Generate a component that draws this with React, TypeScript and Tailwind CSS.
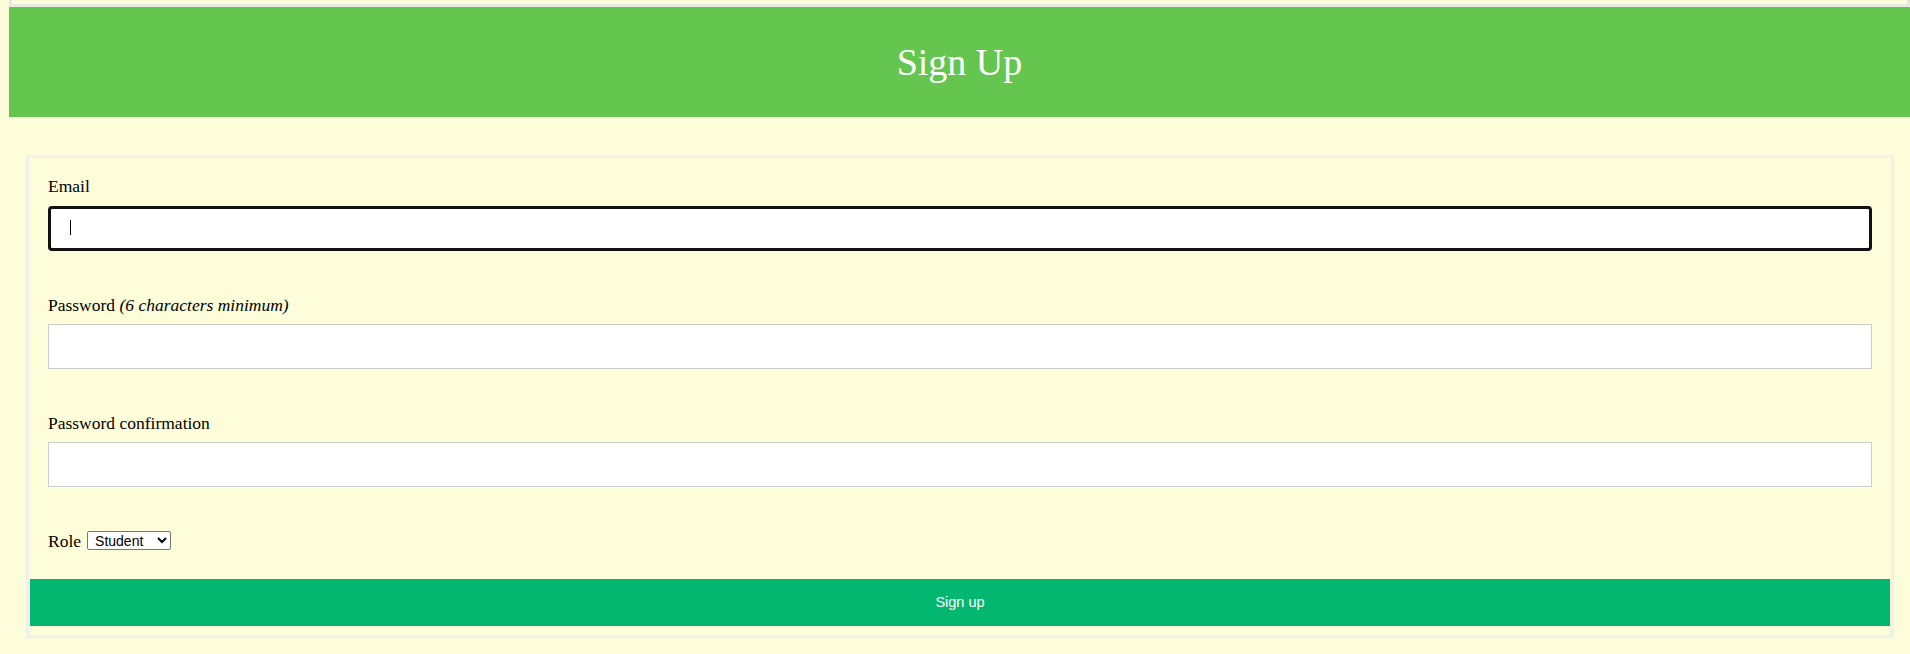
import React from "react"

const serif = "font-['Liberation_Serif','Times_New_Roman',serif]"
const sans = "font-['Liberation_Sans',Arial,sans-serif]"

function Field({
  label,
  children,
  focused = false,
  className = "mb-[44px]",
}: {
  label: React.ReactNode
  children?: React.ReactNode
  focused?: boolean
  className?: string
}) {
  return (
    <div className={className}>
      <label className={`block text-[17.5px] leading-[20px] text-black ${focused ? "mb-[10px]" : "mb-[9px]"}`}>
        {label}
      </label>
      {focused ? (
        <div className="relative">
          <input
            type="email"
            className="block w-full h-[45px] bg-white border-[3px] border-[#121212] rounded-[4px] pl-[19px] outline-none"
          />
          {/* text caret */}
          <span className="absolute left-[22px] top-[14px] h-[15px] w-px bg-black" />
        </div>
      ) : (
        children
      )}
    </div>
  )
}

function PlainInput({ type }: { type: string }) {
  return <input type={type} className="block w-full h-[45px] bg-white border border-[#cccccc] px-[18px]" />
}

export default function App() {
  return (
    <div className={`min-h-screen bg-[#fdfed9] pl-[9px] ${serif}`}>
      {/* bottom edge of the box above, scrolled off */}
      <div className="h-[7px] border-x-[3px] border-b-[3px] border-[#e8e8e4]" />

      <header className="h-[110px] bg-[#65c64f] flex items-center justify-center">
        <h1 className="text-[38px] leading-none text-white">Sign Up</h1>
      </header>

      <form className="ml-[17px] mr-[16px] mt-[38px] border-[3px] border-[#f0f0ec] pt-[18px] pb-[9px] px-px">
        <div className="px-[18px]">
          <Field label="Email" focused />
          <Field
            label={
              <>
                Password <i>(6 characters minimum)</i>
              </>
            }
          >
            <PlainInput type="password" />
          </Field>
          <Field label="Password confirmation" className="mb-[43px]">
            <PlainInput type="password" />
          </Field>

          <div className="flex items-center h-[21px]">
            <label className="text-[17.5px] leading-[20px] text-black">Role</label>
            <select
              defaultValue="student"
              className={`ml-[6px] w-[84px] h-[19px] bg-white border border-[#767676] rounded-[2px] pl-[3px] text-[14px] text-black ${sans}`}
            >
              <option value="student">Student</option>
              <option value="teacher">Teacher</option>
            </select>
          </div>
        </div>

        <button
          type="button"
          className={`mt-[28px] block w-full h-[47px] bg-[#03b770] text-white text-[14.5px] ${sans}`}
        >
          Sign up
        </button>
      </form>
    </div>
  )
}
